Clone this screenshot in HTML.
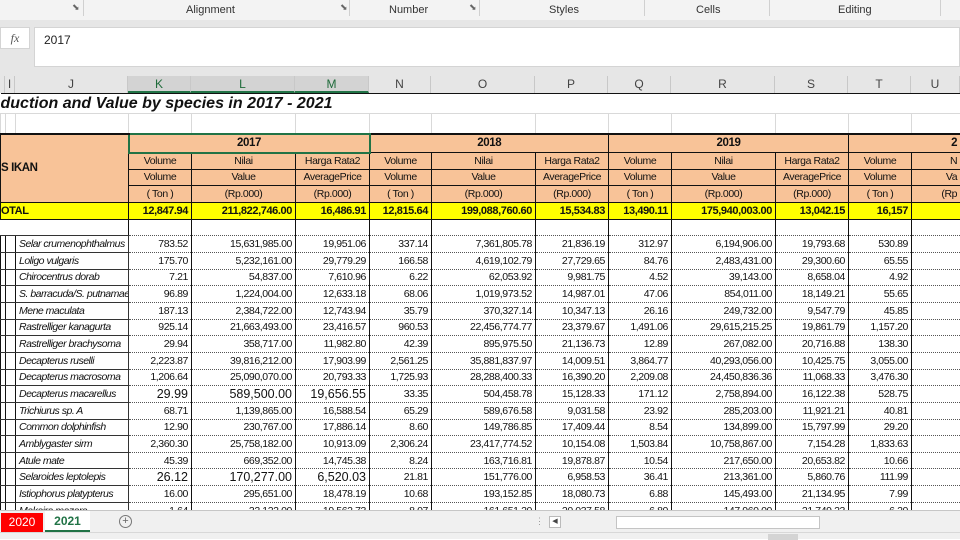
<!DOCTYPE html>
<html><head><meta charset="utf-8"><style>
*{margin:0;padding:0;box-sizing:border-box}
body{width:960px;height:539px;overflow:hidden;background:#fff;font-family:"Liberation Sans",sans-serif;position:relative}
.rib{position:absolute;left:0;top:0;width:960px;height:20px;background:#f3f3f3;font-size:11px;color:#333}
.rib span{position:absolute;top:4px}
.rib i{position:absolute;top:0;width:1px;height:16px;background:#d0d0d0}
.gray{position:absolute;left:0;top:20px;width:960px;height:73px;background:#e6e6e6}
.fx{position:absolute;left:0;top:27px;width:30px;height:22px;background:#fff;border:1px solid #d4d4d4;font:italic 12px "Liberation Serif",serif;color:#555;text-align:center;line-height:20px}
.fb{position:absolute;left:34px;top:27px;width:926px;height:40px;background:#fff;border:1px solid #d4d4d4;font-size:12px;padding:5px 9px;color:#222}
.ch{position:absolute;top:76px;height:17px;font-size:12px;color:#444;text-align:center;line-height:17px;border-right:1px solid #c8c8c8;background:#e6e6e6}
.ch.s{background:#d3d3d3;color:#1e6b3a;border-bottom:2px solid #217346}
table{position:absolute;left:0;top:93px;width:960px;border-collapse:collapse;table-layout:fixed;font-family:"Liberation Sans",sans-serif;font-size:10.5px;letter-spacing:-0.4px;color:#111}
td{border:1px solid #d9d9d9;white-space:nowrap;overflow:hidden;padding:0 3px;text-align:right;height:16.67px;line-height:14px}
tr.h td{background:#f8c398;border:1px solid #111;text-align:center;font-size:10.5px}
tr.y td{font-weight:bold;font-size:11.5px;border-top:2px solid #111}
tr.t td{background:#ffff00;border:1px solid #111;font-weight:bold;font-size:11px}
tr.d td{border-top:1px dotted #555;border-bottom:1px dotted #555;border-left:1px solid #111;border-right:1px solid #111}
tr.d td.n{text-align:left;font-style:italic;border:1px solid #333;font-size:10.5px;letter-spacing:-0.5px}
tr.d td.e{border-left:1px solid #111;border-right:1px solid #111;border-top:1px solid #333;border-bottom:1px solid #333}
td.big{font-size:12.5px;letter-spacing:0}
.tabs{position:absolute;left:0;top:510px;width:960px;height:22px;background:#f0f0f0;border-top:1px solid #c6c6c6}
.st{position:absolute;left:0;top:532px;width:960px;height:7px;background:#f0f0f0;border-top:1px solid #d8d8d8}
</style></head><body>
<div class="rib">
<span style="left:72px;top:2px;font-size:9px;color:#666">⬊</span><i style="left:83px"></i>
<span style="left:186px">Alignment</span><span style="left:340px;top:2px;font-size:9px;color:#666">⬊</span><i style="left:349px"></i>
<span style="left:389px">Number</span><span style="left:469px;top:2px;font-size:9px;color:#666">⬊</span><i style="left:479px"></i>
<span style="left:549px">Styles</span><i style="left:644px"></i>
<span style="left:696px">Cells</span><i style="left:769px"></i>
<span style="left:838px">Editing</span><i style="left:940px"></i>
</div>
<div class="gray"></div>
<div class="fx">fx</div>
<div class="fb">2017</div>
<div class="ch" style="left:0;width:5px"></div>
<div class="ch" style="left:5px;width:10px">I</div>
<div class="ch" style="left:15px;width:113px">J</div>
<div class="ch s" style="left:128px;width:63px">K</div>
<div class="ch s" style="left:191px;width:104px">L</div>
<div class="ch s" style="left:295px;width:74px">M</div>
<div class="ch" style="left:369px;width:62px">N</div>
<div class="ch" style="left:431px;width:104px">O</div>
<div class="ch" style="left:535px;width:73px">P</div>
<div class="ch" style="left:608px;width:63px">Q</div>
<div class="ch" style="left:671px;width:104px">R</div>
<div class="ch" style="left:775px;width:73px">S</div>
<div class="ch" style="left:848px;width:63px">T</div>
<div class="ch" style="left:911px;width:49px">U</div>
<table>
<colgroup><col style="width:5px"><col style="width:10px"><col style="width:113px"><col style="width:63px"><col style="width:104px"><col style="width:74px"><col style="width:62px"><col style="width:104px"><col style="width:73px"><col style="width:63px"><col style="width:104px"><col style="width:73px"><col style="width:63px"><col style="width:49px"></colgroup>
<tr style="height:20px"><td colspan="14" style="text-align:left;padding:0;border:none;border-top:1px solid #111;font:bold italic 16px 'Liberation Sans',sans-serif;letter-spacing:0;height:20px">duction and Value by species in 2017 - 2021</td></tr>
<tr style="height:20px"><td style="height:20px"></td><td></td><td></td><td></td><td></td><td></td><td></td><td></td><td></td><td></td><td></td><td></td><td></td><td></td></tr>
<tr class="h y" style="height:19px"><td colspan="3" rowspan="4" style="text-align:left;padding:0;font-weight:bold;font-size:11.5px;border-top:2px solid #111">S IKAN</td><td colspan="3" style="border:2px solid #217346">2017</td><td colspan="3">2018</td><td colspan="3">2019</td><td colspan="2" style="text-align:right">2</td></tr>
<tr class="h"><td>Volume</td><td>Nilai</td><td>Harga Rata2</td><td>Volume</td><td>Nilai</td><td>Harga Rata2</td><td>Volume</td><td>Nilai</td><td>Harga Rata2</td><td>Volume</td><td style="text-align:right">N</td></tr>
<tr class="h"><td>Volume</td><td>Value</td><td>AveragePrice</td><td>Volume</td><td>Value</td><td>AveragePrice</td><td>Volume</td><td>Value</td><td>AveragePrice</td><td>Volume</td><td style="text-align:right">Va</td></tr>
<tr class="h"><td>( Ton )</td><td>(Rp.000)</td><td>(Rp.000)</td><td>( Ton )</td><td>(Rp.000)</td><td>(Rp.000)</td><td>( Ton )</td><td>(Rp.000)</td><td>(Rp.000)</td><td>( Ton )</td><td style="text-align:right">(Rp</td></tr>
<tr class="t"><td colspan="3" style="text-align:left;padding:0">OTAL</td><td>12,847.94</td><td>211,822,746.00</td><td>16,486.91</td><td>12,815.64</td><td>199,088,760.60</td><td>15,534.83</td><td>13,490.11</td><td>175,940,003.00</td><td>13,042.15</td><td>16,157</td><td></td></tr>
<tr class="d"><td class="e" colspan="3" style="border-left:none"></td><td></td><td></td><td></td><td></td><td></td><td></td><td></td><td></td><td></td><td></td><td></td></tr>
<tr class="d"><td class="e"></td><td class="e"></td><td class="n">Selar crumenophthalmus</td><td>783.52</td><td>15,631,985.00</td><td>19,951.06</td><td>337.14</td><td>7,361,805.78</td><td>21,836.19</td><td>312.97</td><td>6,194,906.00</td><td>19,793.68</td><td>530.89</td><td></td></tr>
<tr class="d"><td class="e"></td><td class="e"></td><td class="n">Loligo vulgaris</td><td>175.70</td><td>5,232,161.00</td><td>29,779.29</td><td>166.58</td><td>4,619,102.79</td><td>27,729.65</td><td>84.76</td><td>2,483,431.00</td><td>29,300.60</td><td>65.55</td><td></td></tr>
<tr class="d"><td class="e"></td><td class="e"></td><td class="n">Chirocentrus dorab</td><td>7.21</td><td>54,837.00</td><td>7,610.96</td><td>6.22</td><td>62,053.92</td><td>9,981.75</td><td>4.52</td><td>39,143.00</td><td>8,658.04</td><td>4.92</td><td></td></tr>
<tr class="d"><td class="e"></td><td class="e"></td><td class="n">S. barracuda/S. putnamae</td><td>96.89</td><td>1,224,004.00</td><td>12,633.18</td><td>68.06</td><td>1,019,973.52</td><td>14,987.01</td><td>47.06</td><td>854,011.00</td><td>18,149.21</td><td>55.65</td><td></td></tr>
<tr class="d"><td class="e"></td><td class="e"></td><td class="n">Mene maculata</td><td>187.13</td><td>2,384,722.00</td><td>12,743.94</td><td>35.79</td><td>370,327.14</td><td>10,347.13</td><td>26.16</td><td>249,732.00</td><td>9,547.79</td><td>45.85</td><td></td></tr>
<tr class="d"><td class="e"></td><td class="e"></td><td class="n">Rastrelliger kanagurta</td><td>925.14</td><td>21,663,493.00</td><td>23,416.57</td><td>960.53</td><td>22,456,774.77</td><td>23,379.67</td><td>1,491.06</td><td>29,615,215.25</td><td>19,861.79</td><td>1,157.20</td><td></td></tr>
<tr class="d"><td class="e"></td><td class="e"></td><td class="n">Rastrelliger brachysoma</td><td>29.94</td><td>358,717.00</td><td>11,982.80</td><td>42.39</td><td>895,975.50</td><td>21,136.73</td><td>12.89</td><td>267,082.00</td><td>20,716.88</td><td>138.30</td><td></td></tr>
<tr class="d"><td class="e"></td><td class="e"></td><td class="n">Decapterus ruselli</td><td>2,223.87</td><td>39,816,212.00</td><td>17,903.99</td><td>2,561.25</td><td>35,881,837.97</td><td>14,009.51</td><td>3,864.77</td><td>40,293,056.00</td><td>10,425.75</td><td>3,055.00</td><td></td></tr>
<tr class="d"><td class="e"></td><td class="e"></td><td class="n">Decapterus macrosoma</td><td>1,206.64</td><td>25,090,070.00</td><td>20,793.33</td><td>1,725.93</td><td>28,288,400.33</td><td>16,390.20</td><td>2,209.08</td><td>24,450,836.36</td><td>11,068.33</td><td>3,476.30</td><td></td></tr>
<tr class="d"><td class="e"></td><td class="e"></td><td class="n">Decapterus macarellus</td><td class="big">29.99</td><td class="big">589,500.00</td><td class="big">19,656.55</td><td>33.35</td><td>504,458.78</td><td>15,128.33</td><td>171.12</td><td>2,758,894.00</td><td>16,122.38</td><td>528.75</td><td></td></tr>
<tr class="d"><td class="e"></td><td class="e"></td><td class="n">Trichiurus sp. A</td><td>68.71</td><td>1,139,865.00</td><td>16,588.54</td><td>65.29</td><td>589,676.58</td><td>9,031.58</td><td>23.92</td><td>285,203.00</td><td>11,921.21</td><td>40.81</td><td></td></tr>
<tr class="d"><td class="e"></td><td class="e"></td><td class="n">Common dolphinfish</td><td>12.90</td><td>230,767.00</td><td>17,886.14</td><td>8.60</td><td>149,786.85</td><td>17,409.44</td><td>8.54</td><td>134,899.00</td><td>15,797.99</td><td>29.20</td><td></td></tr>
<tr class="d"><td class="e"></td><td class="e"></td><td class="n">Amblygaster sirm</td><td>2,360.30</td><td>25,758,182.00</td><td>10,913.09</td><td>2,306.24</td><td>23,417,774.52</td><td>10,154.08</td><td>1,503.84</td><td>10,758,867.00</td><td>7,154.28</td><td>1,833.63</td><td></td></tr>
<tr class="d"><td class="e"></td><td class="e"></td><td class="n">Atule mate</td><td>45.39</td><td>669,352.00</td><td>14,745.38</td><td>8.24</td><td>163,716.81</td><td>19,878.87</td><td>10.54</td><td>217,650.00</td><td>20,653.82</td><td>10.66</td><td></td></tr>
<tr class="d"><td class="e"></td><td class="e"></td><td class="n">Selaroides leptolepis</td><td class="big">26.12</td><td class="big">170,277.00</td><td class="big">6,520.03</td><td>21.81</td><td>151,776.00</td><td>6,958.53</td><td>36.41</td><td>213,361.00</td><td>5,860.76</td><td>111.99</td><td></td></tr>
<tr class="d"><td class="e"></td><td class="e"></td><td class="n">Istiophorus platypterus</td><td>16.00</td><td>295,651.00</td><td>18,478.19</td><td>10.68</td><td>193,152.85</td><td>18,080.73</td><td>6.88</td><td>145,493.00</td><td>21,134.95</td><td>7.99</td><td></td></tr>
<tr class="d"><td class="e"></td><td class="e"></td><td class="n">Makaira mazara</td><td>1.64</td><td>32,122.00</td><td>19,562.73</td><td>8.07</td><td>161,651.20</td><td>20,037.58</td><td>6.80</td><td>147,960.00</td><td>21,749.23</td><td>6.20</td><td></td></tr>
</table>
<div class="tabs">
<div style="position:absolute;left:1px;top:2px;width:42px;height:19px;background:#ff0000;color:#fff;font-size:12px;text-align:center;line-height:19px">2020</div>
<div style="position:absolute;left:45px;top:0;width:45px;height:21px;background:#fff;color:#217346;font-weight:bold;font-size:12px;text-align:center;line-height:20px;border-bottom:2px solid #217346">2021</div>
<div style="position:absolute;left:119px;top:4px;width:13px;height:13px;border:1px solid #777;border-radius:50%;font-size:11px;line-height:11px;text-align:center;color:#666">+</div>
<div style="position:absolute;left:535px;top:5px;font-size:9px;color:#999">⋮</div>
<div style="position:absolute;left:549px;top:5px;width:12px;height:12px;background:#fff;border:1px solid #bbb;font-size:7px;line-height:10px;text-align:center;color:#444">◀</div>
<div style="position:absolute;left:616px;top:5px;width:204px;height:13px;background:#fff;border:1px solid #c4c4c4"></div>
</div>
<div class="st"><div style="position:absolute;left:768px;top:1px;width:30px;height:6px;background:#d4d4d4"></div></div>
</body></html>
